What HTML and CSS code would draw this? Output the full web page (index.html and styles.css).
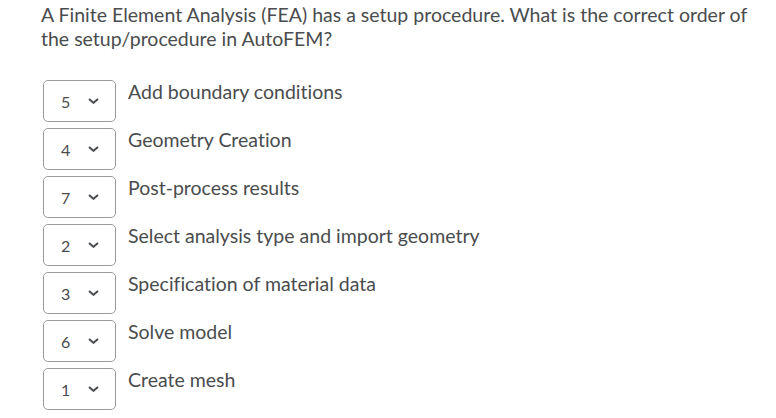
FILE: index.html
```html
<!DOCTYPE html>
<html>
<head>
<meta charset="utf-8">
<link rel="stylesheet" href="styles.css">
</head>
<body>
<div class="page">
  <p class="question">A Finite Element Analysis (FEA) has a setup procedure. What is the correct order of the setup/procedure in AutoFEM?</p>
  <ul class="items">
    <li class="item"><div class="select"><span class="val">5</span><svg class="chev" viewBox="0 0 11 6"><path d="M1 1 L5.5 4.8 L10 1" /></svg></div><span class="label">Add boundary conditions</span></li>
    <li class="item"><div class="select"><span class="val">4</span><svg class="chev" viewBox="0 0 11 6"><path d="M1 1 L5.5 4.8 L10 1" /></svg></div><span class="label">Geometry Creation</span></li>
    <li class="item"><div class="select"><span class="val">7</span><svg class="chev" viewBox="0 0 11 6"><path d="M1 1 L5.5 4.8 L10 1" /></svg></div><span class="label">Post-process results</span></li>
    <li class="item"><div class="select"><span class="val">2</span><svg class="chev" viewBox="0 0 11 6"><path d="M1 1 L5.5 4.8 L10 1" /></svg></div><span class="label">Select analysis type and import geometry</span></li>
    <li class="item"><div class="select"><span class="val">3</span><svg class="chev" viewBox="0 0 11 6"><path d="M1 1 L5.5 4.8 L10 1" /></svg></div><span class="label">Specification of material data</span></li>
    <li class="item"><div class="select"><span class="val">6</span><svg class="chev" viewBox="0 0 11 6"><path d="M1 1 L5.5 4.8 L10 1" /></svg></div><span class="label">Solve model</span></li>
    <li class="item"><div class="select"><span class="val">1</span><svg class="chev" viewBox="0 0 11 6"><path d="M1 1 L5.5 4.8 L10 1" /></svg></div><span class="label">Create mesh</span></li>
  </ul>
</div>
</body>
</html>
```
FILE: styles.css
```css
html, body {
  margin: 0;
  padding: 0;
  background: #ffffff;
}
.page {
  font-family: Lato, "Open Sans", sans-serif;
  color: #4a4c4e;
  padding: 3px 10px 0 41px;
  font-variant-ligatures: none;
}
.question {
  margin: 0;
  font-size: 19.5px;
  line-height: 24px;
  max-width: 720px;
}
.items {
  list-style: none;
  margin: 29px 0 0 0;
  padding: 0 0 0 2px;
  display: flex;
  flex-direction: column;
  gap: 6px;
}
.item {
  display: flex;
  align-items: flex-start;
  gap: 12px;
}
.select {
  box-sizing: border-box;
  width: 73px;
  height: 42px;
  border: 1px solid #9a9a9a;
  border-radius: 5px;
  display: flex;
  align-items: center;
  padding-left: 17px;
}
.val {
  font-size: 16px;
  width: 27px;
}
.chev {
  width: 11px;
  height: 6px;
  fill: none;
  stroke: #494c4e;
  stroke-width: 2;
}
.label {
  font-size: 19.5px;
  line-height: 24px;
  margin-top: 0;
}
```
